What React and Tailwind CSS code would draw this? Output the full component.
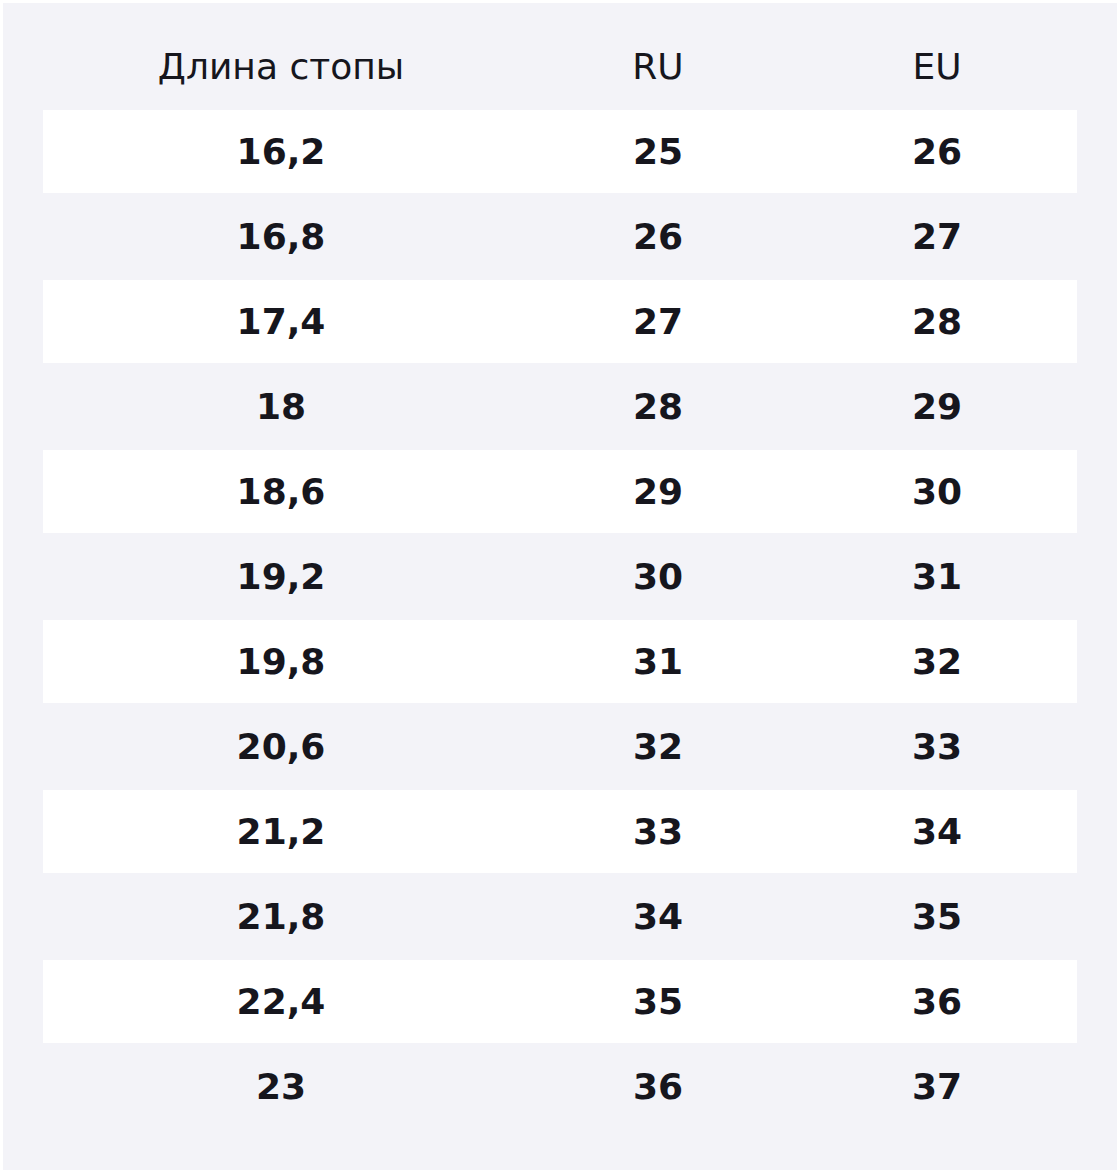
export default function App() {
  const rows = [
    ["16,2", "25", "26"],
    ["16,8", "26", "27"],
    ["17,4", "27", "28"],
    ["18", "28", "29"],
    ["18,6", "29", "30"],
    ["19,2", "30", "31"],
    ["19,8", "31", "32"],
    ["20,6", "32", "33"],
    ["21,2", "33", "34"],
    ["21,8", "34", "35"],
    ["22,4", "35", "36"],
    ["23", "36", "37"],
  ];
  return (
    <div className="w-[1120px] h-[1173px] bg-white p-[3px]" style={{ fontFamily: '"DejaVu Sans", sans-serif' }}>
      <div className="w-[1114px] h-[1167px] bg-[#f3f3f8] px-[40px] pt-[20px] text-[#16161d]">
        <div className="grid grid-cols-[476px_278px_280px] h-[87px] items-center text-[36px] text-center">
          <div>Длина стопы</div>
          <div>RU</div>
          <div>EU</div>
        </div>
        {rows.map((r, i) => (
          <div
            key={i}
            className={
              i % 2 === 0
                ? "grid grid-cols-[476px_278px_280px] h-[83px] items-center text-[36px] font-bold text-center bg-white"
                : "grid grid-cols-[476px_278px_280px] h-[87px] items-center text-[36px] font-bold text-center"
            }
          >
            <div>{r[0]}</div>
            <div>{r[1]}</div>
            <div>{r[2]}</div>
          </div>
        ))}
      </div>
    </div>
  );
}
